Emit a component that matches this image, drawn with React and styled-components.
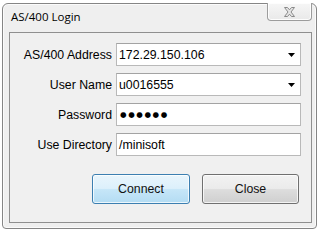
import styled, { createGlobalStyle } from "styled-components";

const GlobalStyle = createGlobalStyle`
    html, body{
        margin: 0;
        padding: 0;
        background: #ffffff;
    }
    body{
        font-family: "Liberation Sans", Arial, sans-serif;
        font-size: 12px;
    }
`;

const Screen = styled.div`
    width: 318px;
    height: 231px;
    padding: 3px 0 0 2px;
    box-sizing: border-box;
`;
const Window = styled.div`
    width: 315px;
    height: 226px;
    box-sizing: border-box;
    border: 1px solid #858585;
    border-radius: 6px 6px 4px 4px;
    background: #efefef;
    box-shadow: inset 0 0 0 1px #fbfbfb;
    display: flex;
    flex-direction: column;
`;
const TitleBar = styled.div`
    height: 28px;
    display: flex;
    align-items: flex-start;
    justify-content: space-between;
    padding: 0 4px 0 8px;
`;
const Title = styled.span`
    font-family: "Open Sans", "Noto Sans", sans-serif;
    font-size: 11.5px;
    color: #000;
    margin-top: 5px;
`;
const CloseBox = styled.div`
    width: 45px;
    height: 18px;
    margin-top: -1px;
    box-sizing: border-box;
    border: 1px solid #9c9c9c;
    border-top: none;
    border-radius: 0 0 4px 4px;
    background: linear-gradient(#f6f6f6, #e9e9e9);
    box-shadow: inset 0 0 0 1px #fdfdfd;
    display: flex;
    align-items: center;
    justify-content: center;
`;
const Panel = styled.div`
    flex: 1;
    margin: 0 4px 5px 6px;
    border: 1px solid #8f8f8f;
    background: #f0f0f0;
    display: flex;
    flex-direction: column;
`;
const Form = styled.div`
    display: grid;
    grid-template-columns: 1fr 185px;
    grid-auto-rows: 23px;
    row-gap: 7px;
    column-gap: 4px;
    padding: 10px 10px 0 0;
`;
const Label = styled.label`
    display: flex;
    align-items: center;
    justify-content: flex-end;
    color: #000;
    font-size: 12.3px;
`;
const Field = styled.div`
    box-sizing: border-box;
    border: 1px solid #b9b9b9;
    border-top-color: #a3a3a3;
    background: #ffffff;
    display: flex;
    align-items: center;
    padding-left: 2px;
    font-size: 12.3px;
    color: #000;
`;
const FieldText = styled.span`
    flex: 1;
`;
const Dots = styled.span`
    font-family: "DejaVu Sans", sans-serif;
    font-size: 7.5px;
    letter-spacing: 1.6px;
    padding-left: 1px;
`;
const Arrow = styled.svg`
    width: 7px;
    height: 4px;
    margin-right: 5px;
`;
const ButtonRow = styled.div`
    display: flex;
    justify-content: flex-end;
    gap: 12px;
    margin-top: 18px;
    padding-right: 12px;
`;
const Button = styled.button`
    width: ${props => props.$w}px;
    height: 30px;
    box-sizing: border-box;
    border-radius: 3px;
    font-family: "Liberation Sans", Arial, sans-serif;
    font-size: 12.3px;
    color: #111;
    padding: 0;
    border: 1px solid ${props => props.$primary ? "#3c7fb1" : "#707070"};
    background: ${props => props.$primary
        ? "linear-gradient(#e9f5fc 0%, #dcf0fb 48%, #c6e6f8 52%, #b3dcf3 100%)"
        : "linear-gradient(#f2f2f2 0%, #ebebeb 48%, #dddddd 52%, #cfcfcf 100%)"};
    box-shadow: inset 0 0 0 1px rgba(255,255,255,0.75);
`;

const DropArrow = () => (
    <Arrow viewBox="0 0 7 4">
        <path d="M0 0 H7 L3.5 4 Z" fill="#000" />
    </Arrow>
);

const App = () => {
    return (
        <Screen>
            <GlobalStyle />
            <Window>
                <TitleBar>
                    <Title>AS/400 Login</Title>
                    <CloseBox>
                        <svg width="13" height="10" viewBox="0 0 13 10">
                            <path d="M1.5 0.5 H4.5 L6.5 2.8 L8.5 0.5 H11.5 L8 5 L11.5 9.5 H8.5 L6.5 7.2 L4.5 9.5 H1.5 L5 5 Z"
                                fill="#e4e4e4" stroke="#8a8a8a" strokeWidth="1" strokeLinejoin="round" />
                        </svg>
                    </CloseBox>
                </TitleBar>
                <Panel>
                    <Form>
                        <Label>AS/400 Address</Label>
                        <Field><FieldText>172.29.150.106</FieldText><DropArrow /></Field>
                        <Label>User Name</Label>
                        <Field><FieldText>u0016555</FieldText><DropArrow /></Field>
                        <Label>Password</Label>
                        <Field><Dots>●●●●●●</Dots></Field>
                        <Label>Use Directory</Label>
                        <Field><FieldText>/minisoft</FieldText></Field>
                    </Form>
                    <ButtonRow>
                        <Button $primary $w={98}>Connect</Button>
                        <Button $w={97}>Close</Button>
                    </ButtonRow>
                </Panel>
            </Window>
        </Screen>
    );
};

export default App;
